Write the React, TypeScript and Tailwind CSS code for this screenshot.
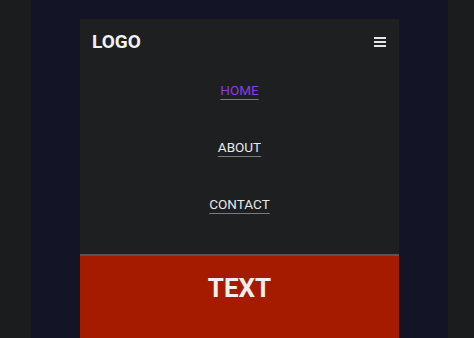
export default function App() {
  const links = [
    { label: "HOME", active: true },
    { label: "ABOUT", active: false },
    { label: "CONTACT", active: false },
  ];

  return (
    <div className="min-h-[338px] bg-[#1b1c1e] font-['Roboto',sans-serif]">
      <div className="ml-[31px] w-[417px] min-h-[338px] bg-[#141427] pt-[19px]">
        <div className="ml-[49px] w-[319px] bg-[#1d1f20]">
          {/* header */}
          <header className="flex h-[45px] items-center justify-between px-[12px]">
            <span className="text-[19px] font-bold leading-none text-[#f2f2f2]">LOGO</span>
            <svg width="12" height="11" viewBox="0 0 12 11" className="mr-[1px]">
              <rect x="0" y="1" width="12" height="2" fill="#e6e6e6" />
              <rect x="0" y="5" width="12" height="2" fill="#e6e6e6" />
              <rect x="0" y="9" width="12" height="2" fill="#e6e6e6" />
            </svg>
          </header>

          {/* nav */}
          <nav className="flex flex-col items-center gap-[37px] pt-[16px] pb-[40px]">
            {links.map((l) => (
              <a
                key={l.label}
                href="#"
                className={`text-[13.5px] leading-5 underline decoration-[#7a7a7a] underline-offset-[4px] ${
                  l.active ? "text-[#8f3ae0]" : "text-[#e8e8e8]"
                }`}
              >
                {l.label}
              </a>
            ))}
          </nav>

          {/* banner */}
          <section className="border-t-2 border-[#5d5352] bg-[#a51b00] pt-[16px] pb-[40px] text-center">
            <h1 className="text-[26px] font-bold leading-8 text-[#f4eeee]">TEXT</h1>
          </section>
        </div>
      </div>
    </div>
  );
}
